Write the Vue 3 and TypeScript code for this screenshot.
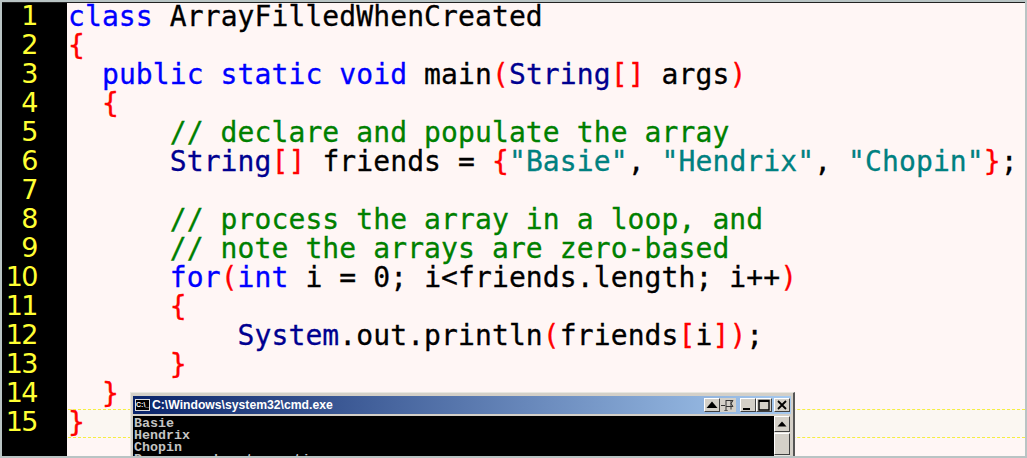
<script setup lang="ts">
type Tok = [string, string];
const lines: Tok[][] = [
  [["k", "class"], ["d", " ArrayFilledWhenCreated"]],
  [["r", "{"]],
  [["d", "  "], ["k", "public static void"], ["d", " main"], ["r", "("], ["n", "String"], ["r", "[]"], ["d", " args"], ["r", ")"]],
  [["d", "  "], ["r", "{"]],
  [["d", "      "], ["c", "// declare and populate the array"]],
  [["d", "      "], ["n", "String"], ["r", "[]"], ["d", " friends = "], ["r", "{"], ["s", "\"Basie\""], ["d", ", "], ["s", "\"Hendrix\""], ["d", ", "], ["s", "\"Chopin\""], ["r", "}"], ["d", ";"]],
  [],
  [["d", "      "], ["c", "// process the array in a loop, and"]],
  [["d", "      "], ["c", "// note the arrays are zero-based"]],
  [["d", "      "], ["k", "for"], ["r", "("], ["k", "int"], ["d", " i = 0; i<friends.length; i++"], ["r", ")"]],
  [["d", "      "], ["r", "{"]],
  [["d", "          "], ["n", "System"], ["d", ".out.println"], ["r", "("], ["d", "friends"], ["r", "["], ["d", "i"], ["r", "])"], ["d", ";"]],
  [["d", "      "], ["r", "}"]],
  [["d", "  "], ["r", "}"]],
  [["r", "}"]],
];
</script>

<template>
  <div class="frame">
    <div class="editor">
      <div class="gutter">
        <div v-for="(_, i) in lines" :key="i" class="num">{{ i + 1 }}</div>
      </div>
      <div class="code">
        <div v-for="(line, i) in lines" :key="i" class="line" :class="{ current: i === 14 }">
          <span v-for="(t, j) in line" :key="j" :class="t[0]">{{ t[1] }}</span>
        </div>
      </div>
    </div>
    <div class="cmd">
      <div class="titlebar">
        <span class="appicon">C:\_</span>
        <span class="title">C:\Windows\system32\cmd.exe</span>
        <div class="btns">
          <span class="btn"><svg width="12" height="8" viewBox="0 0 12 8"><path d="M6 0.500 L11.500 7 H0.500 Z" fill="#000" /></svg></span>
          <span class="btn flat"><svg width="14" height="13" viewBox="0 0 14 13"><path d="M5 1.500h7l-2 3 2 3H5M5 1v11M3 12h4M0 6.500h4M10 1.500v9" fill="none" stroke="#333" stroke-width="1" /></svg></span>
          <span class="btn gap"><svg width="12" height="12" viewBox="0 0 12 12"><path d="M1 9h7v2H1z" fill="#000" /></svg></span>
          <span class="btn"><svg width="12" height="12" viewBox="0 0 12 12"><path d="M1 1.500h10v9.500H1z" fill="none" stroke="#000" stroke-width="1.400" /><path d="M1 2h10" stroke="#000" stroke-width="2" /></svg></span>
          <span class="btn gap2"><svg width="12" height="12" viewBox="0 0 12 12"><path d="M2 2l8 8M10 2l-8 8" stroke="#000" stroke-width="1.800" /></svg></span>
        </div>
      </div>
      <div class="body">
        <div class="output">
          <div>Basie</div>
          <div>Hendrix</div>
          <div>Chopin</div>
          <div>Press any key to continue</div>
        </div>
        <div class="scroll">
          <span class="sbtn"><svg width="10" height="6" viewBox="0 0 10 6"><path d="M5 0.500 L9.500 5.500 H0.500 Z" fill="#000" /></svg></span>
          <span class="thumb"></span>
        </div>
      </div>
    </div>
  </div>
</template>

<style>
html, body { margin: 0; padding: 0; background: #fff; overflow: hidden; }
</style>

<style scoped>
.frame {
  position: relative;
  box-sizing: border-box;
  width: 1027px;
  height: 458px;
  border: 2px solid #b9c4c4;
  overflow: hidden;
}
.editor {
  display: flex;
  height: 100%;
  border-top: 1px solid #222;
  box-sizing: border-box;
}
.gutter {
  width: 65px;
  flex: none;
  background: #000;
  color: #ffff33;
  font: 27px/25px "DejaVu Sans", sans-serif;
  letter-spacing: -1.500px;
}
.num {
  height: 29px;
  width: 35px;
  text-align: right;
}
.code {
  flex: 1;
  background: #fff6f5;
  padding-left: 1px;
  font: 28px/27px "DejaVu Sans Mono", monospace;
  letter-spacing: 0.100px;
  -webkit-text-stroke: 0.300px currentColor;
  color: #000;
  white-space: pre;
}
.line {
  position: relative;
  height: 29px;
}
.current {
  background: #fbf7f2;
}
.current::after {
  content: "";
  position: absolute;
  inset: 0;
  border-top: 1px dashed #f5ee40;
  border-bottom: 1px dashed #f5ee40;
}
.k { color: #0000ff; }
.r { color: #ff0000; }
.n { color: #000090; }
.c { color: #008000; }
.s { color: #008080; }
.d { color: #000; }

.cmd {
  position: absolute;
  left: 128px;
  top: 390px;
  width: 665px;
  height: 70px;
  box-sizing: border-box;
  background: #d4d0c8;
  border-top: 1px solid #e8e6e0;
  border-left: 1px solid #e8e6e0;
  border-right: 2px solid #555;
  padding: 3px 2px 0;
}
.titlebar {
  height: 18px;
  display: flex;
  align-items: center;
  background: linear-gradient(90deg, #0a246a, #a6caf0);
  padding-left: 2px;
}
.appicon {
  width: 15px;
  height: 12px;
  flex: none;
  background: #000;
  border: 1px solid #ddd;
  box-sizing: border-box;
  color: #fff;
  font: bold 7px/10px "Liberation Sans", sans-serif;
  overflow: hidden;
  text-align: center;
  white-space: nowrap;
}
.title {
  margin-left: 2px;
  color: #fff;
  font: bold 12.200px/16px "Liberation Sans", sans-serif;
}
.btns {
  margin-left: auto;
  display: flex;
  padding-right: 1px;
}
.btn {
  width: 16px;
  height: 14px;
  box-sizing: border-box;
  background: #d4d0c8;
  border: 1px solid;
  border-color: #fff #404040 #404040 #fff;
  display: flex;
  align-items: center;
  justify-content: center;
  overflow: hidden;
}
.btn.flat { border-color: #d4d0c8; }
.btn.gap { margin-left: 4px; }
.btn.gap2 { margin-left: 2px; }
.body {
  display: flex;
  margin-top: 2px;
  margin-right: 1px;
  height: 60px;
}
.output {
  flex: 1;
  background: #000;
  color: #c4c4c4;
  font: bold 13.330px/12px "Liberation Mono", monospace;
  padding: 2px 0 0 1px;
  overflow: hidden;
}
.scroll {
  width: 16px;
  flex: none;
  display: flex;
  flex-direction: column;
  background: #e8e6e0;
}
.sbtn, .thumb {
  box-sizing: border-box;
  background: #d4d0c8;
  border: 1px solid;
  border-color: #fff #404040 #404040 #fff;
  display: flex;
  align-items: center;
  justify-content: center;
}
.sbtn { height: 16px; }
.thumb { height: 22px; margin-top: 1px; }
</style>
